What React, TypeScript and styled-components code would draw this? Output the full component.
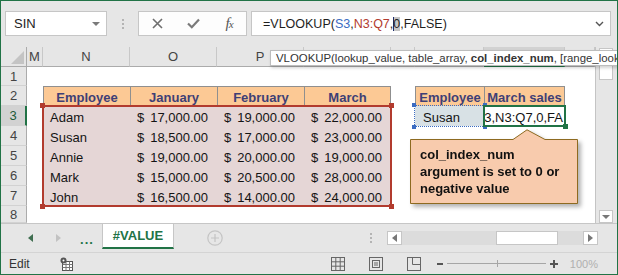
import React from 'react'
import styled, { createGlobalStyle, css } from 'styled-components'

const GREEN = '#217346'
const RED = '#b23b2e'
const BLUE = '#3b6cc2'
const PEACH = '#fcc995'
const PINK = '#e5d6d6'
const INPUT_TEXT = '#3f3f76'
const UI = '"Liberation Sans", Arial, sans-serif'

const GlobalStyle = createGlobalStyle`
  html, body { margin: 0; padding: 0; background: #fff; }
  body { font-family: ${UI}; overflow: hidden; }
`

const Window = styled.div`
  position: relative;
  width: 618px;
  height: 275px;
  box-sizing: border-box;
  border: 1px solid ${GREEN};
  background: #e6e6e6;
  display: flex;
  flex-direction: column;
  overflow: hidden;
`

/* ---------- formula bar ---------- */

const FormulaBar = styled.div`
  flex: none;
  height: 46px;
  box-sizing: border-box;
  display: flex;
  align-items: flex-start;
  padding: 10px 6px 0 4px;
`
const NameBox = styled.div`
  width: 102px;
  height: 25px;
  box-sizing: border-box;
  background: #fff;
  border: 1px solid #c6c6c6;
  display: flex;
  align-items: center;
  justify-content: space-between;
  padding: 0 6px 0 8px;
  font-size: 13px;
  color: #222;
`
const Grip = styled.div<{ $w: number; $h: number }>`
  flex: none;
  width: ${p => p.$w}px;
  height: ${p => p.$h}px;
  display: flex;
  flex-direction: column;
  align-items: center;
  justify-content: center;
  gap: 2px;
`
const GripDot = styled.i`
  display: block;
  width: 2px;
  height: 2px;
  background: #b4b4b4;
`
const FxButtons = styled.div`
  width: 109px;
  height: 25px;
  box-sizing: border-box;
  background: #fdfdfd;
  border: 1px solid #c6c6c6;
  display: grid;
  grid-template-columns: repeat(3, 36px);
  align-items: center;
  justify-items: center;
  margin-right: 4px;
`
const FxLabel = styled.span`
  font-family: "Liberation Serif", serif;
  font-style: italic;
  font-size: 15px;
  color: #555;
  letter-spacing: -1px;
  & small { font-size: 11px; }
`
const FormulaInput = styled.div`
  flex: 1;
  height: 25px;
  box-sizing: border-box;
  background: #fff;
  border: 1px solid #c6c6c6;
  display: flex;
  align-items: center;
  justify-content: space-between;
  padding: 0 6px 0 11px;
  font-size: 12.5px;
  color: #1e1e1e;
  white-space: nowrap;
`
const Ref = styled.span<{ $color: string }>`
  color: ${p => p.$color};
`
const Caret = styled.span`
  background: #c6c6c6;
  box-shadow: inset 1px 0 0 #1d2c6b;
`

/* ---------- sheet ---------- */

const SheetArea = styled.div`
  flex: none;
  height: 176px;
  display: flex;
`
const Sheet = styled.div`
  position: relative;
  width: 594px;
  height: 176px;
  display: grid;
  grid-template-columns: 26px 16px repeat(4, 87px) 24px 69px 81px 30px;
  grid-template-rows: 20px 19px repeat(6, 20px) 17px;
  background: #fff;
  overflow: hidden;
`
const Corner = styled.div`
  grid-row: 1;
  grid-column: 1;
  background: #e6e6e6;
  border-right: 1px solid #ababab;
  border-bottom: 1px solid #ababab;
  display: flex;
  align-items: flex-end;
  justify-content: flex-end;
  padding: 0 2px 2px 0;
`
const ColHead = styled.div<{ $c: number; $active?: boolean }>`
  grid-row: 1;
  grid-column: ${p => p.$c};
  display: flex;
  align-items: center;
  justify-content: center;
  background: ${p => (p.$active ? '#d2d2d2' : '#e6e6e6')};
  border-right: 1px solid #c8c8c8;
  border-bottom: ${p => (p.$active ? `2px solid ${GREEN}` : '1px solid #ababab')};
  font-size: 13px;
  color: #444;
`
const RowHead = styled.div<{ $r: number; $active?: boolean }>`
  grid-row: ${p => p.$r};
  grid-column: 1;
  display: flex;
  align-items: center;
  justify-content: center;
  background: ${p => (p.$active ? '#d2d2d2' : '#e6e6e6')};
  border-right: ${p => (p.$active ? `2px solid ${GREEN}` : '1px solid #ababab')};
  border-bottom: 1px solid #d2d2d2;
  font-size: 13px;
  color: ${p => (p.$active ? '#1e5a37' : '#444')};
`

type Kind = 'head' | 'name' | 'money' | 'lookup' | 'edit'

const kindStyles: Record<Kind, ReturnType<typeof css>> = {
  head: css`
    background: ${PEACH};
    color: ${INPUT_TEXT};
    font-weight: bold;
    justify-content: center;
    border-top: 1px solid #8f8f8f;
    border-left: 1px solid #8f8f8f;
  `,
  name: css`
    background: ${PINK};
    padding-left: 7px;
  `,
  money: css`
    background: ${PINK};
    justify-content: space-between;
    padding: 0 9px 1px 7px;
  `,
  lookup: css`
    background: #d8e1e5;
    padding-left: 8px;
  `,
  edit: css`
    justify-content: flex-end;
    padding-right: 2px;
  `,
}

const Cell = styled.div<{ $r: number; $c: number; $kind?: Kind; $edge?: boolean }>`
  grid-row: ${p => p.$r};
  grid-column: ${p => p.$c};
  min-width: 0;
  box-sizing: border-box;
  display: flex;
  align-items: flex-end;
  padding-bottom: 1px;
  font-size: 13px;
  line-height: 15px;
  color: #141414;
  white-space: nowrap;
  overflow: hidden;
  ${p => (p.$kind ? kindStyles[p.$kind] : '')}
  ${p => (p.$edge ? 'border-right: 1px solid #8f8f8f;' : '')}
`

const RangeBox = styled.div<{ $area: string; $color: string; $dotted?: boolean; $w: number }>`
  grid-area: ${p => p.$area};
  position: relative;
  margin: -1px;
  border: ${p => `${p.$w}px ${p.$dotted ? 'dotted' : 'solid'} ${p.$color}`};
  pointer-events: none;
`
const Handle = styled.span<{ $at: 'tl' | 'tr' | 'bl' | 'br'; $color: string; $size: number }>`
  position: absolute;
  width: ${p => p.$size}px;
  height: ${p => p.$size}px;
  background: ${p => p.$color};
  ${p => (p.$at[0] === 't' ? 'top' : 'bottom')}: ${p => -p.$size + 1}px;
  ${p => (p.$at[1] === 'l' ? 'left' : 'right')}: ${p => -p.$size + 1}px;
`

const Callout = styled.div`
  position: absolute;
  left: 409px;
  top: 82px;
  width: 168px;
  height: 75px;
  filter: drop-shadow(3px 3px 2px rgba(0, 0, 0, 0.3));
`
const CalloutShape = styled.svg`
  position: absolute;
  inset: 0;
`
const CalloutText = styled.div`
  position: relative;
  padding: 17px 0 0 10px;
  font-size: 13px;
  line-height: 17px;
  font-weight: bold;
  color: #111;
`

const Tooltip = styled.div`
  position: absolute;
  left: 269px;
  top: 49px;
  width: 380px;
  height: 16px;
  box-sizing: border-box;
  background: #fff;
  border: 1px solid #bdbdbd;
  box-shadow: 1px 2px 3px rgba(0, 0, 0, 0.18);
  padding-left: 5px;
  font-size: 11.4px;
  line-height: 14px;
  color: #333;
  white-space: nowrap;
`

const VScroll = styled.div`
  width: 22px;
  box-sizing: border-box;
  border-left: 1px solid #c4c4c4;
  padding: 1px 4px 0 3px;
  display: flex;
  flex-direction: column;
  gap: 2px;
`
const ScrollBox = styled.div<{ $h: number }>`
  height: ${p => p.$h}px;
  box-sizing: border-box;
  background: #fff;
  border: 1px solid #c6c6c6;
  display: flex;
  align-items: center;
  justify-content: center;
`
const ScrollGap = styled.div`
  flex: 1;
`

/* ---------- tabs ---------- */

const TabBar = styled.div`
  flex: none;
  height: 29px;
  box-sizing: border-box;
  display: flex;
  align-items: center;
  padding: 0 19px 0 15px;
  border-top: 1px solid #c6c6c6;
`
const NavSlot = styled.div<{ $w: number }>`
  width: ${p => p.$w}px;
  height: 100%;
  display: flex;
  align-items: center;
  justify-content: center;
`
const Ellipsis = styled.span`
  color: ${GREEN};
  font-weight: bold;
  font-size: 13px;
  letter-spacing: 1px;
  margin-top: 2px;
`
const SheetTab = styled.div`
  width: 72px;
  align-self: flex-start;
  height: 25px;
  box-sizing: border-box;
  background: #fff;
  border-left: 1px solid #c6c6c6;
  border-right: 1px solid #c6c6c6;
  border-bottom: 2px solid ${GREEN};
  display: flex;
  align-items: center;
  justify-content: center;
  font-size: 13px;
  font-weight: bold;
  color: ${GREEN};
`
const Spacer = styled.div`
  flex: 1;
`
const HScroll = styled.div`
  width: 211px;
  height: 14px;
  display: flex;
  background: #dcdcdc;
`
const Track = styled.div`
  flex: 1;
  padding-left: 94px;
  display: flex;
`
const Thumb = styled.div`
  width: 62px;
  box-sizing: border-box;
  background: #fff;
  border: 1px solid #c6c6c6;
`
const ArrowBox = styled.div`
  width: 15px;
  box-sizing: border-box;
  background: #fff;
  border: 1px solid #c6c6c6;
  display: flex;
  align-items: center;
  justify-content: center;
`

/* ---------- status ---------- */

const StatusBar = styled.div`
  flex: 1;
  box-sizing: border-box;
  display: flex;
  align-items: center;
  padding: 0 19px 0 8px;
  border-top: 1px solid #d4d4d4;
  font-size: 12px;
  color: #333;
`
const Mode = styled.span`
  width: 51px;
`
const Views = styled.div`
  display: flex;
  align-items: center;
  gap: 24px;
  margin-right: 16px;
`
const Zoom = styled.div`
  display: flex;
  align-items: center;
  gap: 4px;
  color: #555;
`
const Slider = styled.div`
  position: relative;
  width: 99px;
  height: 1px;
  background: #a6a6a6;
  &::after {
    content: '';
    position: absolute;
    left: 50px;
    top: -3px;
    width: 1px;
    height: 7px;
    background: #a6a6a6;
  }
`
const Percent = styled.span`
  margin-left: 8px;
  font-size: 11px;
  color: #b0b0b0;
`

/* ---------- data ---------- */

type Spec = { kind: Kind; text: string; edge?: boolean }

const COLS = ['M', 'N', 'O', 'P', 'Q', 'R', 'S', 'T', 'U']

const people = [
  ['Adam', '17,000.00', '19,000.00', '22,000.00'],
  ['Susan', '18,500.00', '17,000.00', '23,000.00'],
  ['Annie', '19,000.00', '20,000.00', '19,000.00'],
  ['Mark', '15,000.00', '20,500.00', '28,000.00'],
  ['John', '16,500.00', '14,000.00', '24,000.00'],
]

const content: Record<string, Spec> = {
  N2: { kind: 'head', text: 'Employee' },
  O2: { kind: 'head', text: 'January' },
  P2: { kind: 'head', text: 'February' },
  Q2: { kind: 'head', text: 'March', edge: true },
  S2: { kind: 'head', text: 'Employee' },
  T2: { kind: 'head', text: 'March sales', edge: true },
  S3: { kind: 'lookup', text: 'Susan' },
  T3: { kind: 'edit', text: '(S3,N3:Q7,0,FA' },
}
people.forEach((p, i) => {
  const r = i + 3
  content[`N${r}`] = { kind: 'name', text: p[0] }
  ;['O', 'P', 'Q'].forEach((col, j) => {
    content[`${col}${r}`] = { kind: 'money', text: p[j + 1] }
  })
})

const Tri = ({ dir, color }: { dir: 'l' | 'r' | 'd'; color: string }) => {
  const pts = dir === 'l' ? '5,0 5,8 0,4' : dir === 'r' ? '0,0 0,8 5,4' : '0,0 8,0 4,4'
  return (
    <svg width={dir === 'd' ? 8 : 5} height={dir === 'd' ? 4 : 8}>
      <polygon points={pts} fill={color} />
    </svg>
  )
}

export default function App() {
  const cells: React.ReactNode[] = []
  for (let r = 1; r <= 8; r++) {
    cells.push(
      <RowHead key={`h${r}`} $r={r + 1} $active={r === 3}>
        {r}
      </RowHead>
    )
    COLS.forEach((col, i) => {
      const spec = content[`${col}${r}`]
      cells.push(
        <Cell key={`${col}${r}`} $r={r + 1} $c={i + 2} $kind={spec?.kind} $edge={spec?.edge}>
          {spec?.kind === 'money' ? (
            <>
              <span>$</span>
              <span>{spec.text}</span>
            </>
          ) : (
            spec?.text
          )}
        </Cell>
      )
    })
  }

  return (
    <>
      <GlobalStyle />
      <Window>
        <FormulaBar>
          <NameBox>
            SIN
            <Tri dir="d" color="#7a7a7a" />
          </NameBox>
          <Grip $w={31} $h={25}>
            <GripDot />
            <GripDot />
            <GripDot />
          </Grip>
          <FxButtons>
            <svg width="11" height="11" viewBox="0 0 11 11">
              <path d="M1 1 L10 10 M10 1 L1 10" stroke="#6e6e6e" strokeWidth="1.6" />
            </svg>
            <svg width="13" height="11" viewBox="0 0 13 11">
              <path d="M1 5.5 L4.8 9.2 L12 1.5" stroke="#7a7a7a" strokeWidth="2.2" fill="none" />
            </svg>
            <FxLabel>
              f<small>x</small>
            </FxLabel>
          </FxButtons>
          <FormulaInput>
            <span>
              =VLOOKUP(<Ref $color={BLUE}>S3</Ref>,<Ref $color={RED}>N3:Q7</Ref>,<Caret>0</Caret>,FALSE)
            </span>
            <svg width="9" height="6" viewBox="0 0 9 6">
              <path d="M1 1 L4.5 4.5 L8 1" stroke="#555" strokeWidth="1.4" fill="none" />
            </svg>
          </FormulaInput>
        </FormulaBar>

        <SheetArea>
          <Sheet>
            <Corner>
              <svg width="13" height="13">
                <polygon points="13,0 13,13 0,13" fill="#c4c4c4" />
              </svg>
            </Corner>
            {COLS.map((col, i) => (
              <ColHead key={col} $c={i + 2} $active={col === 'T'}>
                {col}
              </ColHead>
            ))}
            {cells}

            <RangeBox $area="4 / 3 / 9 / 7" $color={RED} $w={2}>
              <Handle $at="tl" $color={RED} $size={5} />
              <Handle $at="tr" $color={RED} $size={5} />
              <Handle $at="bl" $color={RED} $size={5} />
              <Handle $at="br" $color={RED} $size={5} />
            </RangeBox>
            <RangeBox $area="4 / 8 / 5 / 9" $color={BLUE} $w={1} $dotted>
              <Handle $at="tl" $color={BLUE} $size={4} />
              <Handle $at="tr" $color={BLUE} $size={4} />
              <Handle $at="bl" $color={BLUE} $size={4} />
              <Handle $at="br" $color={BLUE} $size={4} />
            </RangeBox>
            <RangeBox $area="4 / 9 / 5 / 10" $color={GREEN} $w={2}>
              <Handle $at="br" $color={GREEN} $size={5} />
            </RangeBox>

            <Callout>
              <CalloutShape width="168" height="75" viewBox="0 0 168 75">
                <path
                  d="M0.5 10.5 H103 L117 0.8 L135 10.5 H167.5 V74.5 H0.5 Z"
                  fill="#f8cbad"
                  stroke="#8d6a20"
                  strokeWidth="1"
                />
              </CalloutShape>
              <CalloutText>
                col_index_num
                <br />
                argument is set to 0 or
                <br />
                negative value
              </CalloutText>
            </Callout>
          </Sheet>

          <VScroll>
            <ScrollBox $h={14}>
              <svg width="8" height="4">
                <polygon points="0,4 8,4 4,0" fill="#777" />
              </svg>
            </ScrollBox>
            <ScrollBox $h={16} />
            <ScrollGap />
            <ScrollBox $h={13}>
              <Tri dir="d" color="#777" />
            </ScrollBox>
          </VScroll>
        </SheetArea>

        <TabBar>
          <NavSlot $w={28}>
            <Tri dir="l" color="#3f6e50" />
          </NavSlot>
          <NavSlot $w={28}>
            <Tri dir="r" color="#c2c2c2" />
          </NavSlot>
          <NavSlot $w={30}>
            <Ellipsis>...</Ellipsis>
          </NavSlot>
          <SheetTab>#VALUE</SheetTab>
          <NavSlot $w={81}>
            <svg width="16" height="16" viewBox="0 0 16 16">
              <circle cx="8" cy="8" r="7.2" stroke="#c4c4c4" strokeWidth="1.2" fill="none" />
              <path d="M8 4 V12 M4 8 H12" stroke="#c4c4c4" strokeWidth="1.2" />
            </svg>
          </NavSlot>
          <Spacer />
          <Grip $w={10} $h={14}>
            <GripDot />
            <GripDot />
            <GripDot />
          </Grip>
          <NavSlot $w={11} />
          <HScroll>
            <ArrowBox>
              <Tri dir="l" color="#777" />
            </ArrowBox>
            <Track>
              <Thumb />
            </Track>
            <ArrowBox>
              <Tri dir="r" color="#777" />
            </ArrowBox>
          </HScroll>
        </TabBar>

        <StatusBar>
          <Mode>Edit</Mode>
          <svg width="13" height="14" viewBox="0 0 13 14">
            <rect x="2.5" y="4.5" width="10" height="9" fill="#fff" stroke="#555" />
            <path d="M2.5 7.5 H12.5 M2.5 10.5 H12.5 M6 4.5 V13.5 M9.5 4.5 V13.5" stroke="#777" />
            <circle cx="3.5" cy="3.5" r="3" fill="#555" />
            <circle cx="3.5" cy="3.5" r="1" fill="#fff" />
          </svg>
          <Spacer />
          <Views>
            <svg width="14" height="14" viewBox="0 0 14 14">
              <rect x="0.5" y="0.5" width="13" height="13" fill="none" stroke="#666" />
              <path d="M4.8 0.5 V13.5 M9.2 0.5 V13.5 M0.5 4.8 H13.5 M0.5 9.2 H13.5" stroke="#666" />
            </svg>
            <svg width="14" height="14" viewBox="0 0 14 14">
              <rect x="0.5" y="0.5" width="13" height="13" fill="none" stroke="#666" />
              <rect x="3.5" y="3.5" width="7" height="7" fill="none" stroke="#666" />
              <path d="M5 6 H9 M5 8 H9" stroke="#666" />
            </svg>
            <svg width="14" height="14" viewBox="0 0 14 14">
              <rect x="0.5" y="0.5" width="13" height="13" fill="none" stroke="#666" />
              <path d="M5.5 0.5 V7.5 H13.5" fill="none" stroke="#666" />
            </svg>
          </Views>
          <Zoom>
            <svg width="6" height="2">
              <rect width="6" height="2" fill="#555" />
            </svg>
            <Slider />
            <svg width="8" height="8">
              <path d="M0 4 H8 M4 0 V8" stroke="#555" strokeWidth="2" />
            </svg>
            <Percent>100%</Percent>
          </Zoom>
        </StatusBar>

        <Tooltip>
          VLOOKUP(lookup_value, table_array, <b>col_index_num</b>, [range_lookup])
        </Tooltip>
      </Window>
    </>
  )
}
